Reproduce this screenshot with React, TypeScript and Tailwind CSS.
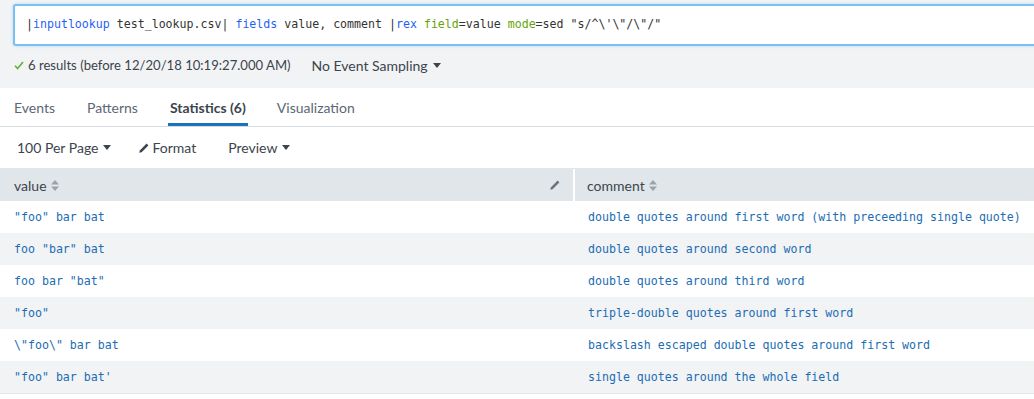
const ROWS = [
  { value: '"foo" bar bat', comment: 'double quotes around first word (with preceeding single quote)' },
  { value: 'foo "bar" bat', comment: 'double quotes around second word' },
  { value: 'foo bar "bat"', comment: 'double quotes around third word' },
  { value: '"foo"', comment: 'triple-double quotes around first word' },
  { value: '\\"foo\\" bar bat', comment: 'backslash escaped double quotes around first word' },
  { value: '"foo" bar bat\'', comment: 'single quotes around the whole field' },
];

const Caret = () => (
  <svg width="8" height="5" viewBox="0 0 8 5" className="ml-[5px] inline-block">
    <path d="M0 0h8L4 5z" fill="currentColor" />
  </svg>
);

const SortIcon = () => (
  <svg width="8" height="11" viewBox="0 0 8 11" className="ml-[4px] inline-block text-[#9aa3ab]">
    <path d="M0 4.5L4 0l4 4.5zM0 6.5h8L4 11z" fill="currentColor" />
  </svg>
);

const Pencil = ({ className }: { className?: string }) => (
  <svg width="10" height="10" viewBox="0 0 10 10" className={className}>
    <path d="M7.6 0.6l1.8 1.8L2.6 9.2 0.3 9.7l0.5-2.3z" fill="currentColor" />
  </svg>
);

const App = () => {
  return (
    <div className="h-[399px] w-[1034px] overflow-hidden bg-white font-['Lato','Open_Sans',sans-serif]">
      <div className="bg-[#f2f3f5] pt-[4px]">
        <div className="-mr-2 ml-[13px] flex h-[42px] items-center rounded-[3px] border-2 border-[#7cc0f2] bg-white pl-[11px] font-['DejaVu_Sans_Mono',monospace] text-[11.6px] whitespace-pre text-[#333] shadow-[0_0_3px_#a9d6f7]">
          <span>|</span>
          <span className="text-[#1f5ff5]">inputlookup</span>
          <span> test_lookup.csv| </span>
          <span className="text-[#1f5ff5]">fields</span>
          <span> value, comment |</span>
          <span className="text-[#1f5ff5]">rex</span>
          <span> </span>
          <span className="text-[#65a30d]">field</span>
          <span>=value </span>
          <span className="text-[#65a30d]">mode</span>
          <span>=sed "s/^\'\"/\"/"</span>
        </div>
        <div className="flex h-[42px] items-center pb-[3px] pl-[14px] text-[14px] text-[#3c444d]">
          <svg width="10" height="9" viewBox="0 0 10 9" className="mr-[4px] text-[#5cb531]">
            <path d="M1 4.8l2.6 2.7L9 1" fill="none" stroke="currentColor" strokeWidth="1.6" />
          </svg>
          <span className="text-[13.1px]">6 results (before 12/20/18 10:19:27.000 AM)</span>
          <span className="ml-[21px] flex items-center">
            No Event Sampling
            <Caret />
          </span>
        </div>
      </div>

      <div className="flex h-[39px] border-b border-[#d7dce1] pl-[14px] text-[14px] text-[#5c6773]">
        <div className="flex items-center pt-[1px]">Events</div>
        <div className="ml-[32px] flex items-center pt-[1px]">Patterns</div>
        <div className="ml-[30px] flex items-center border-b-[3px] border-[#1a73b9] px-[2px] pt-[4px] font-bold text-[#3c444d]">
          Statistics (6)
        </div>
        <div className="ml-[29px] flex items-center pt-[1px]">Visualization</div>
      </div>

      <div className="flex h-[42px] items-center border-b border-[#e1e6eb] pl-[17px] text-[14px] text-[#3c444d]">
        <span className="flex items-center">
          100 Per Page
          <Caret />
        </span>
        <span className="ml-[28px] flex items-center">
          <Pencil className="mr-[3px] text-[#3c444d]" />
          Format
        </span>
        <span className="ml-[32px] flex items-center">
          Preview
          <Caret />
        </span>
      </div>

      <div className="flex h-[32px] bg-[#e1e6eb] text-[14px] text-[#3c444d]">
        <div className="flex w-[575px] items-center justify-between border-r-2 border-white pl-[14px] pr-[13px]">
          <span className="flex items-center">
            value
            <SortIcon />
          </span>
          <Pencil className="text-[#6b747c]" />
        </div>
        <div className="flex items-center pl-[12px]">
          comment
          <SortIcon />
        </div>
      </div>

      {ROWS.map((row, i) => (
        <div
          key={i}
          className={`flex h-[32px] items-center pt-[2px] font-['DejaVu_Sans_Mono',monospace] text-[11.6px] whitespace-pre text-[#1a6db3] ${
            i % 2 === 1 ? 'bg-[#f2f3f5]' : 'bg-white'
          }`}
        >
          <div className="w-[577px] pl-[14px]">{row.value}</div>
          <div className="pl-[11px]">{row.comment}</div>
        </div>
      ))}
      <div className="h-px bg-[#e1e6eb]" />
    </div>
  );
};

export default App;
